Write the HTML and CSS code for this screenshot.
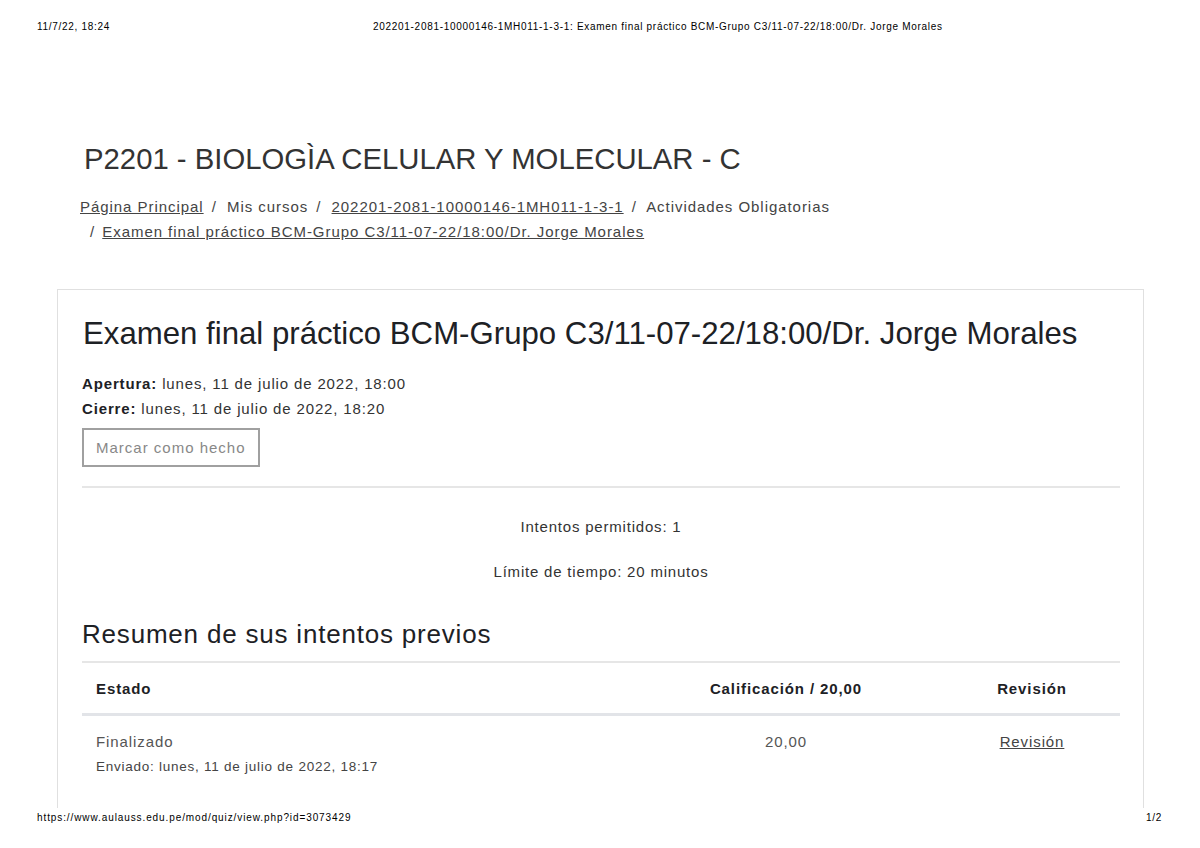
FILE: index.html
```html
<!DOCTYPE html>
<html lang="es">
  <head>
    <meta charset="UTF-8" />
    <meta name="viewport" content="width=device-width, initial-scale=1.0" />
    <title>Examen final práctico BCM-Grupo C3</title>
    <link rel="stylesheet" href="styles.css">
  </head>
  <body>
    <header class="print-head">
      <span class="print-date">11/7/22, 18:24</span>
      <span class="print-title">202201-2081-10000146-1MH011-1-3-1: Examen final práctico BCM-Grupo C3/11-07-22/18:00/Dr. Jorge Morales</span>
    </header>

    <main class="sheet">
      <div class="page-header">
        <h1 class="course-title">P2201 - BIOLOGÌA CELULAR Y MOLECULAR - C</h1>
        <nav class="breadcrumb">
          <a href="#">Página Principal</a>
          <span class="sep">/</span> Mis cursos
          <span class="sep">/</span> <a href="#">202201-2081-10000146-1MH011-1-3-1</a>
          <span class="sep">/</span> Actividades Obligatorias
          <br>
          <span class="sep first">/</span> <a href="#">Examen final práctico BCM-Grupo C3/11-07-22/18:00/Dr. Jorge Morales</a>
        </nav>
      </div>

      <section class="card">
        <h2 class="quiz-title">Examen final práctico BCM-Grupo C3/11-07-22/18:00/Dr. Jorge Morales</h2>
        <div class="dates">
          <div><strong>Apertura:</strong> lunes, 11 de julio de 2022, 18:00</div>
          <div><strong>Cierre:</strong> lunes, 11 de julio de 2022, 18:20</div>
        </div>
        <button class="btn-done">Marcar como hecho</button>
        <hr class="divider">

        <div class="quiz-info">
          <p>Intentos permitidos: 1</p>
          <p>Límite de tiempo: 20 minutos</p>
        </div>

        <h3 class="summary-title">Resumen de sus intentos previos</h3>
        <table class="attempts">
          <thead>
            <tr>
              <th class="col-state">Estado</th>
              <th class="col-grade">Calificación / 20,00</th>
              <th class="col-review">Revisión</th>
            </tr>
          </thead>
          <tbody>
            <tr>
              <td class="col-state">
                Finalizado
                <span class="submitted">Enviado: lunes, 11 de julio de 2022, 18:17</span>
              </td>
              <td class="col-grade">20,00</td>
              <td class="col-review"><a href="#">Revisión</a></td>
            </tr>
          </tbody>
        </table>
      </section>
    </main>

    <footer class="print-foot">
      <span class="print-url">https://www.aulauss.edu.pe/mod/quiz/view.php?id=3073429</span>
      <span>1/2</span>
    </footer>
  </body>
</html>
```

FILE: styles.css
```css
body {
  margin: 0;
  background: #fff;
  font-family: "Liberation Sans", Arial, sans-serif;
  color: #333;
}

.print-head,
.print-foot {
  display: flex;
  font-size: 10px;
  letter-spacing: 0.7px;
  color: #000;
  padding: 0 38px 0 37px;
}

.print-head {
  height: 55px;
  padding-top: 21px;
  box-sizing: border-box;
}

.print-title {
  margin-left: 263px;
}

.print-foot {
  justify-content: space-between;
  padding-top: 4px;
}

.print-url {
  letter-spacing: 0.9px;
}

.sheet {
  height: 753px;
  overflow: hidden;
  padding: 0 56px 0 57px;
}

.page-header {
  padding: 86px 0 0 0;
}

.course-title {
  margin: 0 0 18px 27px;
  font-size: 29.3px;
  font-weight: normal;
  line-height: 1.2;
  color: #333;
}

.breadcrumb {
  margin-left: 23px;
  font-size: 15px;
  line-height: 25px;
  letter-spacing: 0.95px;
  color: #444;
}

.breadcrumb a,
.attempts a {
  color: #444;
  text-decoration: underline;
}

.breadcrumb .sep {
  margin: 0 5px 0 3px;
}

.breadcrumb .sep.first {
  margin-left: 10px;
  margin-right: 2px;
}

.card {
  margin-top: 45px;
  border: 1px solid #e0e0e0;
  border-bottom: none;
  padding: 25px 23px 40px 24px;
  height: 600px;
}

.quiz-title {
  margin: 0 0 18px 1px;
  font-size: 31.2px;
  font-weight: normal;
  line-height: 1.2;
  color: #1d2125;
}

.dates {
  font-size: 15px;
  line-height: 25px;
  letter-spacing: 0.85px;
  color: #333;
}

.dates strong {
  color: #1d2125;
}

.btn-done {
  margin-top: 7px;
  height: 39px;
  padding: 0 12px;
  background: #fff;
  border: 2px solid #a0a0a0;
  font-family: inherit;
  font-size: 15px;
  letter-spacing: 1px;
  color: #888;
}

.divider {
  margin: 19px 0 0 0;
  border: none;
  border-top: 2px solid #e6e6e6;
}

.quiz-info {
  text-align: center;
  padding-top: 26px;
  font-size: 15px;
  line-height: 25px;
  letter-spacing: 0.8px;
  color: #333;
}

.quiz-info p {
  margin: 0 0 20px 0;
}

.summary-title {
  margin: 35px 0 11px 0;
  font-size: 26px;
  font-weight: normal;
  line-height: 31px;
  letter-spacing: 0.8px;
  color: #1d2125;
}

.attempts {
  width: 100%;
  border-collapse: collapse;
  font-size: 15px;
  line-height: 25px;
  letter-spacing: 0.9px;
}

.attempts th,
.attempts td {
  padding: 13px 14px 12px 14px;
  vertical-align: top;
}

.attempts thead tr {
  border-top: 2px solid #e6e6e6;
  border-bottom: 3px solid #e2e4e8;
}

.attempts th {
  font-weight: bold;
  color: #1d2125;
}

.attempts th.col-state {
  text-align: left;
  width: 518px;
}

.attempts .col-grade {
  text-align: center;
  width: 288px;
}

.attempts .col-review {
  text-align: center;
}

.attempts td {
  color: #555;
}

.submitted {
  display: block;
  font-size: 13.5px;
  letter-spacing: 0.75px;
  color: #444;
}
```
